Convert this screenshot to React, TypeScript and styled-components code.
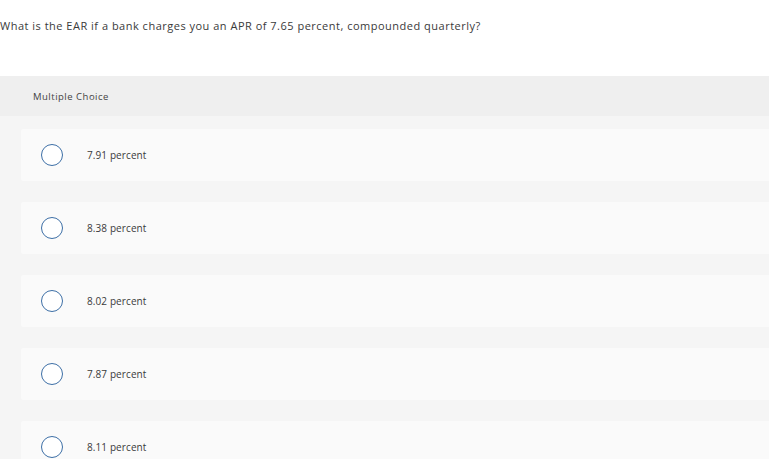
import styled, { createGlobalStyle } from "styled-components";

const GlobalStyle = createGlobalStyle`
    html, body {
        margin: 0;
        padding: 0;
        background: #fff;
    }
`;

const Page = styled.main`
    width: 769px;
    height: 459px;
    overflow: hidden;
    font-family: "Open Sans", Lato, sans-serif;
    color: #333;
`;

const Question = styled.p`
    margin: 0;
    padding-top: 19px;
    height: 76px;
    box-sizing: border-box;
    font-size: 11px;
    line-height: 14px;
    letter-spacing: 0.5px;
    color: #3a3a3a;
`;

const Header = styled.div`
    height: 40px;
    display: flex;
    align-items: center;
    padding-left: 33px;
    background: #efefef;
    font-size: 9.5px;
    letter-spacing: 0.5px;
    color: #444;
`;

const Choices = styled.div`
    display: flex;
    flex-direction: column;
    gap: 21px;
    padding: 13px 0 13px 21px;
    background: #f5f5f5;
`;

const Choice = styled.label`
    height: 52px;
    display: flex;
    align-items: center;
    padding-left: 20px;
    background: #fafafa;
    border-radius: 2px 0 0 2px;
    cursor: pointer;
`;

const Radio = styled.span`
    width: 22px;
    height: 22px;
    box-sizing: border-box;
    border: 1.5px solid #3d6fa6;
    border-radius: 50%;
    background: #fff;
    flex-shrink: 0;
`;

const Label = styled.span`
    margin-left: 24px;
    font-size: 10px;
    letter-spacing: 0.1px;
    color: #3a3a3a;
`;

const options = ["7.91 percent", "8.38 percent", "8.02 percent", "7.87 percent", "8.11 percent"];

const App = () => {
    return (
        <Page>
            <GlobalStyle />
            <Question>What is the EAR if a bank charges you an APR of 7.65 percent, compounded quarterly?</Question>
            <Header>Multiple Choice</Header>
            <Choices>
                {options.map((option) => (
                    <Choice key={option}>
                        <Radio />
                        <Label>{option}</Label>
                    </Choice>
                ))}
            </Choices>
        </Page>
    );
};

export default App;
